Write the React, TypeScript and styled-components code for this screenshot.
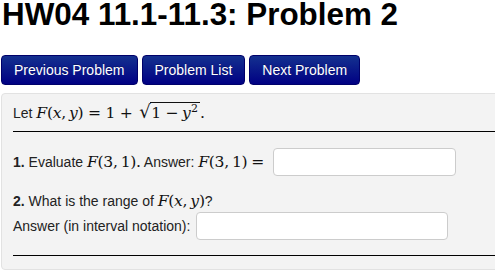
import styled, { createGlobalStyle } from "styled-components";

const GlobalStyle = createGlobalStyle`
  html, body {
    margin: 0;
    padding: 0;
    background: #fff;
    overflow: hidden;
  }
  body {
    font-family: "Liberation Sans", Arial, sans-serif;
    color: #222;
  }
`;

const Page = styled.div`
  padding-left: 1px;
`;

const Title = styled.h1`
  margin: 0;
  font-size: 31.4px;
  line-height: 29px;
  font-weight: bold;
  color: #000;
  padding-left: 1px;
  white-space: nowrap;
`;

const ButtonRow = styled.div`
  display: flex;
  gap: 4px;
  margin-top: 26px;
`;

const NavButton = styled.button`
  height: 30px;
  padding: 0 12px;
  border: 1px solid #00006a;
  border-radius: 4px;
  background: linear-gradient(#14318f, #000083);
  color: #fff;
  font-family: "Liberation Sans", Arial, sans-serif;
  font-size: 14px;
  cursor: pointer;
  text-shadow: 0 -1px 0 rgba(0, 0, 0, 0.25);
`;

const Panel = styled.div`
  margin-top: 8px;
  width: 560px;
  box-sizing: border-box;
  background: #f3f3f3;
  border: 1px solid #e2e2e2;
  border-radius: 4px;
  padding: 8px 0 13px 11px;
  font-size: 14px;
`;

const ProblemText = styled.p`
  margin: 0;
  line-height: 20px;
  white-space: nowrap;
`;

const Rule = styled.div<{ $top: number; $bottom: number }>`
  border-top: 1px solid #000;
  margin-top: ${(p) => p.$top}px;
  margin-bottom: ${(p) => p.$bottom}px;
`;

const Question = styled.div<{ $gap?: number }>`
  margin-top: ${(p) => p.$gap ?? 0}px;
`;

const Line = styled.div<{ $height: number }>`
  line-height: ${(p) => p.$height}px;
  white-space: nowrap;
`;

const Num = styled.b`
  font-weight: bold;
`;

const Math = styled.span`
  font-family: "DejaVu Serif", "Liberation Serif", serif;
  font-size: 15.6px;
  letter-spacing: -0.3px;
  line-height: 0;
  color: #111;
`;

const V = styled.i`
  font-style: italic;
`;

const Op = styled.span<{ $s?: number }>`
  margin: 0 ${(p) => p.$s ?? 0}em;
`;

const Root = styled.span`
  font-size: 18px;
  margin-left: 2px;
`;

const Radicand = styled.span`
  display: inline-block;
  border-top: 1px solid #111;
  line-height: 17px;
  padding-top: 2px;
  padding-left: 1px;
  padding-right: 2px;
  letter-spacing: 0;
`;

const Sup = styled.sup`
  font-size: 11px;
  line-height: 0;
  vertical-align: 6px;
`;

const AnswerInput = styled.input<{ $w: number }>`
  box-sizing: border-box;
  width: ${(p) => p.$w}px;
  height: 28px;
  margin-left: ${(p) => (p.$w > 200 ? 6 : 5)}px;
  padding: 4px 6px;
  border: 1px solid #ccc;
  border-radius: 4px;
  background: #fff;
  font-family: "Liberation Sans", Arial, sans-serif;
  font-size: 14px;
  vertical-align: baseline;
`;

export default function App() {
  return (
    <Page>
      <GlobalStyle />
      <Title>HW04 11.1-11.3: Problem 2</Title>

      <ButtonRow>
        <NavButton>Previous Problem</NavButton>
        <NavButton>Problem List</NavButton>
        <NavButton>Next Problem</NavButton>
      </ButtonRow>

      <Panel>
        <ProblemText>
          Let{" "}
          <Math>
            <V>F</V>(<V>x</V>,<Op $s={0.1} /><V>y</V>)<Op $s={0.3}>=</Op>1
            <Op $s={0.3}>+</Op>
            <Root>√</Root>
            <Radicand>
              1<Op $s={0.25}>−</Op><V>y</V><Sup>2</Sup>
            </Radicand>
            .
          </Math>
        </ProblemText>

        <Rule $top={8} $bottom={16} />

        <Question>
          <Line $height={28}>
            <Num>1.</Num> Evaluate{" "}
            <Math>
              <V>F</V>(3,<Op $s={0.1} />1).
            </Math>{" "}
            Answer:{" "}
            <Math>
              <V>F</V>(3,<Op $s={0.1} />1)<Op $s={0.25}>=</Op>
            </Math>
            <AnswerInput $w={183} type="text" />
          </Line>
        </Question>

        <Question $gap={14}>
          <Line $height={22}>
            <Num>2.</Num> What is the range of{" "}
            <Math>
              <V>F</V>(<V>x</V>,<Op $s={0.1} /><V>y</V>)
            </Math>
            ?
          </Line>
          <Line $height={28}>
            Answer (in interval notation):
            <AnswerInput $w={252} type="text" />
          </Line>
        </Question>

        <Rule $top={15} $bottom={0} />
      </Panel>
    </Page>
  );
}
